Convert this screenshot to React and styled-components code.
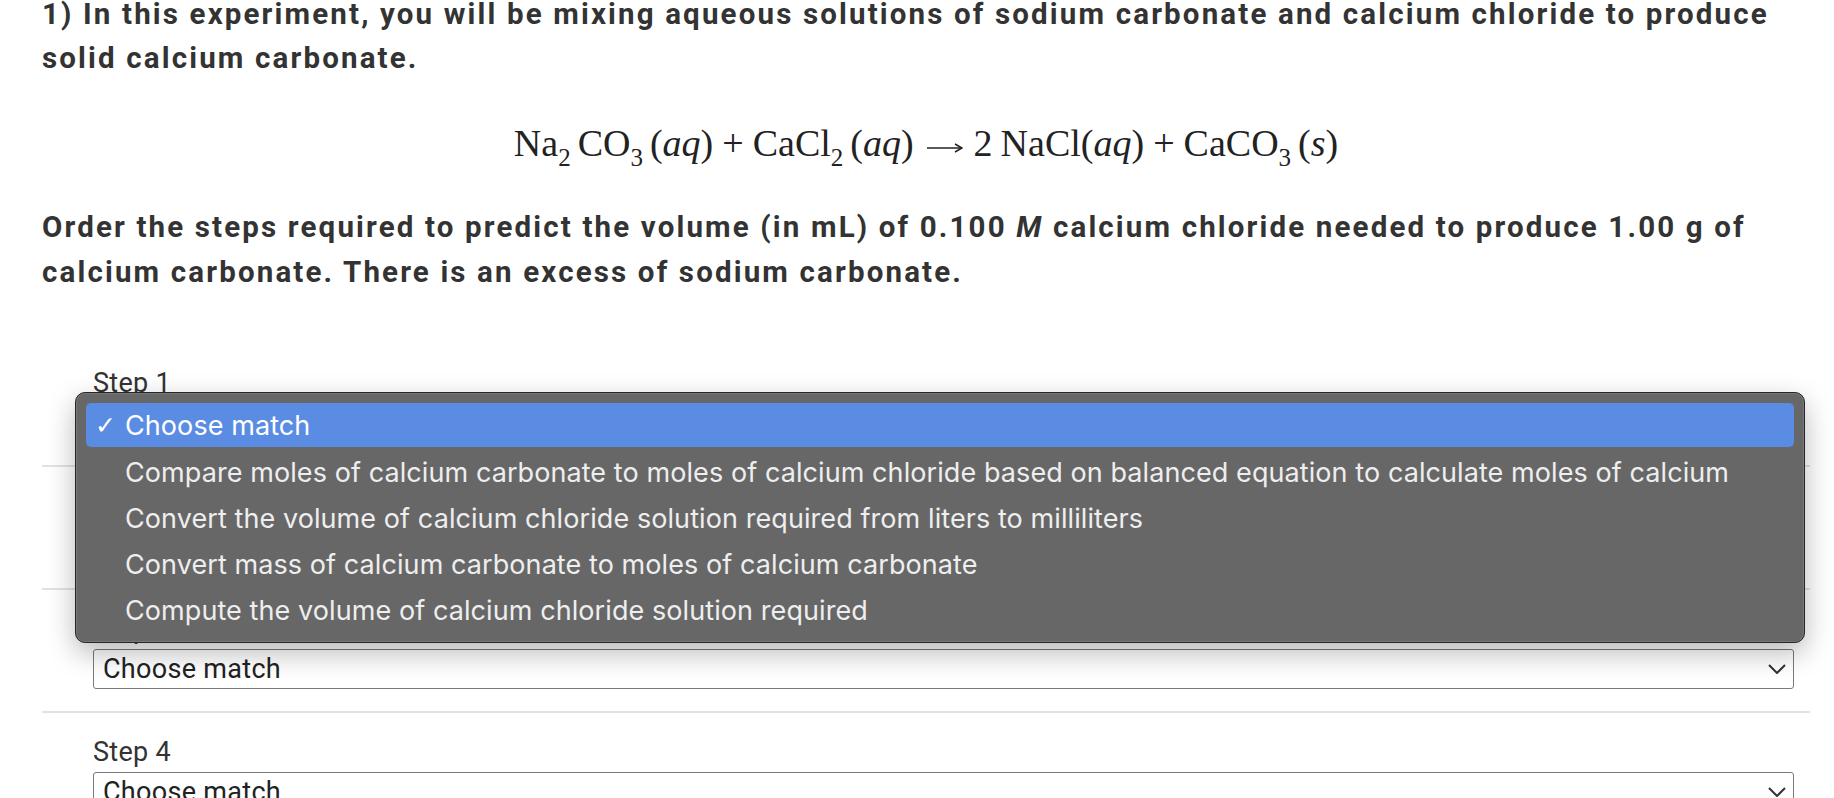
import React from 'react';
import styled, { createGlobalStyle } from 'styled-components';

const GlobalStyle = createGlobalStyle`
  html, body {
    margin: 0;
    padding: 0;
    background: #ffffff;
  }
  body {
    font-family: Roboto, "Liberation Sans", sans-serif;
    color: #333333;
    overflow: hidden;
  }
`;

const Page = styled.div`
  padding: 0 24px 0 42px;
  width: 1834px;
  box-sizing: border-box;
`;

const Question = styled.h2`
  margin: -8px 0 0;
  font-size: 29.5px;
  line-height: 44px;
  font-weight: 700;
  letter-spacing: 2.15px;
  color: #333333;
`;

const Equation = styled.div`
  margin-top: 45px;
  text-align: center;
  font-family: "Liberation Serif", "Times New Roman", serif;
  font-size: 38px;
  line-height: 37px;
  color: #222222;
  white-space: nowrap;
`;

const Sub = styled.sub`
  font-size: 25px;
  vertical-align: -10px;
  line-height: 0;
`;

const Var = styled.i`
  font-style: italic;
`;

const Gap = styled.span`
  display: inline-block;
  width: ${(p) => p.$w || 7}px;
`;

const Op = styled.span`
  margin: 0 9px;
`;

const ArrowSvg = styled.svg`
  margin: 0 11px 0 13px;
  vertical-align: 2px;
`;

const Prompt = styled.p`
  margin: 43px 0 0;
  font-size: 29.5px;
  line-height: 45px;
  font-weight: 700;
  letter-spacing: 2.15px;
  color: #333333;
`;

const Steps = styled.div`
  margin-top: 49px;
`;

const StepBlock = styled.div`
  position: relative;
  padding: 24px 16px 22px 51px;
  border-bottom: 2px solid #e2e2e2;
`;

const StepLabel = styled.div`
  font-size: 27px;
  line-height: 31px;
  letter-spacing: 0.3px;
  color: #333333;
  margin-bottom: 4px;
`;

const SelectWrap = styled.div`
  position: relative;
`;

const SelectBox = styled.div`
  height: 40px;
  box-sizing: border-box;
  border: 1px solid #7a7a7a;
  border-radius: 3px;
  background: #ffffff;
  display: flex;
  align-items: center;
  justify-content: space-between;
  padding: 0 7px 0 9px;
  font-size: 27px;
  letter-spacing: 0.3px;
  color: #222222;
`;

const Popup = styled.div`
  position: absolute;
  left: -18px;
  top: -11px;
  width: 1730px;
  box-sizing: border-box;
  padding: 10px 10px 9px;
  background: #676767;
  border: 1px solid #262626;
  border-radius: 10px;
  box-shadow: inset 0 0 0 1px rgba(255, 255, 255, 0.12), 0 10px 28px rgba(0, 0, 0, 0.28);
  font-family: Inter, "Noto Sans", sans-serif;
  z-index: 5;
`;

const Option = styled.div`
  display: flex;
  align-items: center;
  height: ${(p) => (p.$active ? 44 : 46)}px;
  margin-bottom: ${(p) => (p.$active ? 2 : 0)}px;
  padding-left: 9px;
  border-radius: 5px;
  background: ${(p) => (p.$active ? '#5b8ce4' : 'transparent')};
  color: ${(p) => (p.$active ? '#ffffff' : '#eeeeee')};
  font-size: 27px;
  letter-spacing: 0.08px;
  white-space: nowrap;
`;

const Check = styled.span`
  width: 30px;
  flex: none;
  font-family: "DejaVu Sans", sans-serif;
  font-size: 25px;
`;

const Chevron = () => (
  <svg width="18" height="10" viewBox="0 0 18 10">
    <path d="M1 1 L9 9 L17 1" fill="none" stroke="#333" strokeWidth="2" />
  </svg>
);

const options = [
  'Compare moles of calcium carbonate to moles of calcium chloride based on balanced equation to calculate moles of calcium',
  'Convert the volume of calcium chloride solution required from liters to milliliters',
  'Convert mass of calcium carbonate to moles of calcium carbonate',
  'Compute the volume of calcium chloride solution required',
];

const Select = ({ open }) => (
  <SelectWrap>
    <SelectBox>
      <span>Choose match</span>
      <Chevron />
    </SelectBox>
    {open && (
      <Popup>
        <Option $active>
          <Check>✓</Check>
          Choose match
        </Option>
        {options.map((o) => (
          <Option key={o}>
            <Check />
            {o}
          </Option>
        ))}
      </Popup>
    )}
  </SelectWrap>
);

export default function App() {
  return (
    <Page>
      <GlobalStyle />
      <Question>
        1) In this experiment, you will be mixing aqueous solutions of sodium carbonate and calcium chloride to produce
        <br />
        solid calcium carbonate.
      </Question>
      <Equation>
        Na<Sub>2</Sub>
        <Gap />
        CO<Sub>3</Sub>
        <Gap />
        (<Var>aq</Var>)<Op>+</Op>CaCl<Sub>2</Sub>
        <Gap />
        (<Var>aq</Var>)
        <ArrowSvg width="36" height="12" viewBox="0 0 36 12">
          <path d="M0 6 H34" stroke="#222" strokeWidth="1.6" />
          <path d="M28 2 L35 6 L28 10" fill="none" stroke="#222" strokeWidth="1.6" />
        </ArrowSvg>
        2<Gap $w={8} />
        NaCl(<Var>aq</Var>)<Op>+</Op>CaCO<Sub>3</Sub>
        <Gap />
        (<Var>s</Var>)
      </Equation>
      <Prompt>
        Order the steps required to predict the volume (in mL) of 0.100 <i>M</i> calcium chloride needed to produce
        1.00 g of
        <br />
        calcium carbonate. There is an excess of sodium carbonate.
      </Prompt>
      <Steps>
        {[1, 2, 3, 4].map((n) => (
          <StepBlock key={n}>
            <StepLabel>Step {n}</StepLabel>
            <Select open={n === 1} />
          </StepBlock>
        ))}
      </Steps>
    </Page>
  );
}
